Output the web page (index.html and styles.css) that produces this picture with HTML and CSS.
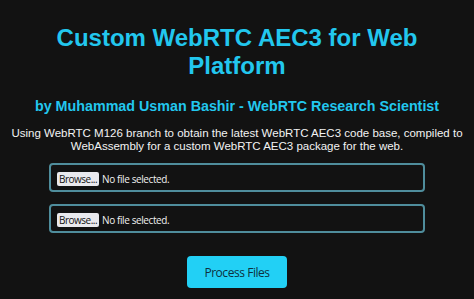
FILE: index.html
```html
<!DOCTYPE html>
<html>
<head>
<meta charset="utf-8">
<link rel="stylesheet" href="styles.css">
</head>
<body>
<main class="page">
  <h1 class="title">Custom WebRTC AEC3 for Web Platform</h1>
  <h2 class="subtitle">by Muhammad Usman Bashir - WebRTC Research Scientist</h2>
  <p class="intro">Using WebRTC M126 branch to obtain the latest WebRTC AEC3 code base, compiled to WebAssembly for a custom WebRTC AEC3 package for the web.</p>
  <div class="file-box"><span class="browse">Browse...</span><span class="file-text">No file selected.</span></div>
  <div class="file-box"><span class="browse">Browse...</span><span class="file-text">No file selected.</span></div>
  <div class="actions"><button class="process">Process Files</button></div>
</main>
</body>
</html>
```
FILE: styles.css
```css
html, body {
  margin: 0;
  padding: 0;
  background: #121212;
}
.page {
  font-family: "Liberation Sans", Arial, sans-serif;
  color: #ffffff;
  text-align: center;
  padding: 24px 4px 0;
  display: flex;
  flex-direction: column;
  align-items: center;
}
.title {
  margin: 0 0 17px;
  font-size: 24px;
  line-height: 28px;
  font-weight: bold;
  color: #22c7ee;
  width: 390px;
}
.subtitle {
  margin: 0 0 12px;
  font-size: 14.3px;
  line-height: 18px;
  font-weight: bold;
  color: #22c7ee;
}
.intro {
  margin: 0 0 10px;
  font-size: 11.5px;
  line-height: 13px;
  color: #f2f2f2;
}
.file-box {
  box-sizing: border-box;
  width: 376px;
  height: 29px;
  border: 2px solid #4f8d9c;
  border-radius: 4px;
  margin-bottom: 12px;
  display: flex;
  align-items: center;
  padding: 2px 6px 0;
  gap: 3px;
}
.browse {
  font-family: "Open Sans", "Noto Sans", sans-serif;
  font-size: 10px;
  letter-spacing: -0.5px;
  line-height: 14px;
  color: #111;
  background: #e9e9ed;
  border-radius: 2px;
  padding: 0 2px;
}
.file-text {
  font-family: "Open Sans", "Noto Sans", sans-serif;
  font-size: 10px;
  letter-spacing: -0.4px;
  color: #f0f0f0;
}
.actions {
  padding-top: 11px;
}
.process {
  width: 100px;
  height: 32px;
  border: none;
  border-radius: 4px;
  background: #22d0f5;
  color: #0d3040;
  font-family: "Open Sans", "Noto Sans", sans-serif;
  font-size: 12px;
  letter-spacing: -0.45px;
  padding: 0;
}
```
